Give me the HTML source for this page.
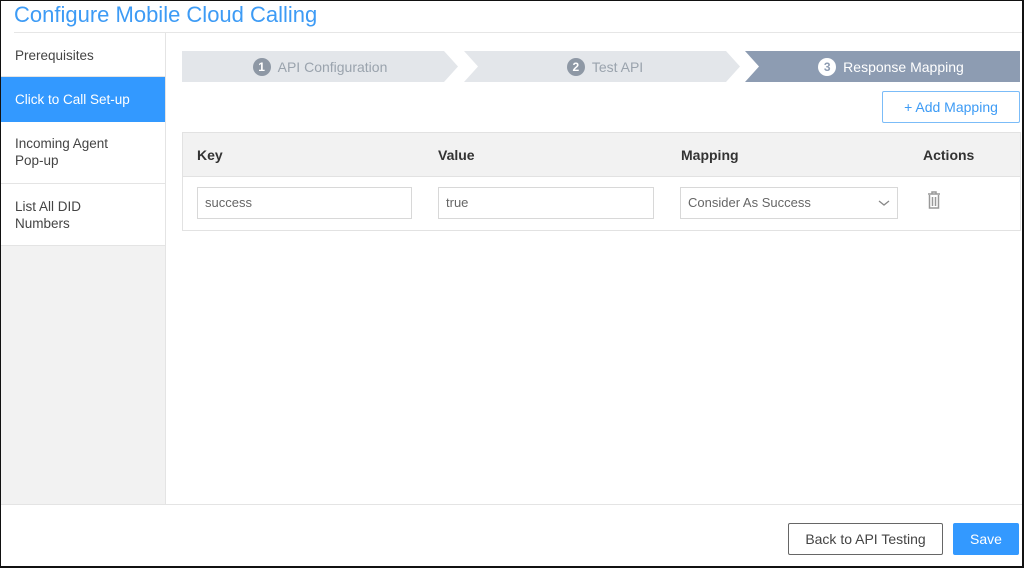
<!DOCTYPE html>
<html><head><meta charset="utf-8"><style>
*{box-sizing:border-box;margin:0;padding:0}
body{width:1024px;height:568px;overflow:hidden;font-family:"Liberation Sans",sans-serif;background:#fff;position:relative}
.frame{position:absolute;left:0;top:0;width:1024px;height:568px;border:1px solid #111;border-right-width:2px;border-bottom-width:2px}
.abs{position:absolute}
.title{left:14px;top:2px;font-size:22px;color:#3d9bf5}
.hline{left:14px;top:32px;width:1008px;height:1px;background:#e6e6e6}
.side{left:1px;top:33px;width:165px;height:471px;background:#f2f2f2;border-right:1px solid #e4e4e4}
.item{position:absolute;left:0;width:164px;background:#fff;border-bottom:1px solid #e4e4e4;font-size:13.5px;color:#444;padding-left:14px;line-height:17px}
.step{position:absolute;top:51px;height:31px;color:#9aa3ad;font-size:14px;display:flex;align-items:center;justify-content:center}
.num{display:inline-block;width:18px;height:18px;border-radius:50%;background:#8e98a5;color:#fff;font-size:12px;font-weight:bold;text-align:center;line-height:18px;margin-right:7px}
.inp{position:absolute;height:32px;border:1px solid #d8d8d8;font-size:13px;color:#666;padding-left:7px;line-height:30px;background:#fff}
.hd{position:absolute;top:147px;font-size:14px;font-weight:bold;color:#333}
.btn{position:absolute;font-size:14px;text-align:center}
</style></head><body>
<div class="abs title">Configure Mobile Cloud Calling</div>
<div class="abs hline"></div>
<div class="abs side">
 <div class="item" style="top:0;height:44px;padding-top:14px">Prerequisites</div>
 <div class="item" style="top:44px;height:45px;padding-top:14px;background:#3399ff;color:#fff;border-bottom:none">Click to Call Set-up</div>
 <div class="item" style="top:89px;height:62px;padding-top:13px">Incoming Agent<br>Pop-up</div>
 <div class="item" style="top:151px;height:62px;padding-top:14px">List All DID<br>Numbers</div>
</div>
<svg class="abs" style="left:182px;top:51px" width="840" height="31">
 <polygon points="0,0 262,0 276,15.5 262,31 0,31" fill="#e3e6ea"/>
 <polygon points="282,0 544,0 558,15.5 544,31 282,31 296,15.5" fill="#e3e6ea"/>
 <polygon points="563,0 838,0 838,31 563,31 577,15.5" fill="#8d9cb2"/>
</svg>
<div class="step" style="left:182px;width:276px"><span class="num">1</span>API Configuration</div>
<div class="step" style="left:470px;width:270px"><span class="num">2</span>Test API</div>
<div class="step" style="left:760px;width:262px;color:#fff"><span class="num" style="background:#fff;color:#8d9cb2">3</span>Response Mapping</div>
<div class="btn" style="left:882px;top:91px;width:138px;height:32px;border:1px solid #7bbcf8;color:#3d9bf5;line-height:30px;border-radius:2px">+ Add Mapping</div>
<div class="abs" style="left:182px;top:132px;width:839px;height:99px;border:1px solid #e2e2e2"></div>
<div class="abs" style="left:183px;top:133px;width:837px;height:44px;background:#f2f2f2;border-bottom:1px solid #e2e2e2"></div>
<div class="hd" style="left:197px">Key</div>
<div class="hd" style="left:438px">Value</div>
<div class="hd" style="left:681px">Mapping</div>
<div class="hd" style="left:923px">Actions</div>
<div class="inp" style="left:197px;top:187px;width:215px">success</div>
<div class="inp" style="left:438px;top:187px;width:216px">true</div>
<div class="inp" style="left:680px;top:187px;width:218px">Consider As Success</div>
<svg class="abs" style="left:878px;top:199px" width="12" height="8"><path d="M1 2 L6 6 L11 2" stroke="#888" stroke-width="1.3" fill="none"/></svg>
<svg class="abs" style="left:925px;top:190px" width="18" height="20"><path d="M3 4 H15 M7 4 V2 H11 V4 M4.5 5 V18 H13.5 V5 M7.5 7 V16 M10.5 7 V16" stroke="#999" stroke-width="1.5" fill="none"/></svg>
<div class="abs" style="left:1px;top:504px;width:1021px;height:1px;background:#e4e4e4"></div>
<div class="btn" style="left:788px;top:523px;width:155px;height:32px;border:1px solid #666;color:#444;line-height:30px;border-radius:2px">Back to API Testing</div>
<div class="btn" style="left:953px;top:523px;width:66px;height:32px;background:#3399ff;color:#fff;line-height:32px;border-radius:2px">Save</div>
<div class="frame"></div>
</body></html>
